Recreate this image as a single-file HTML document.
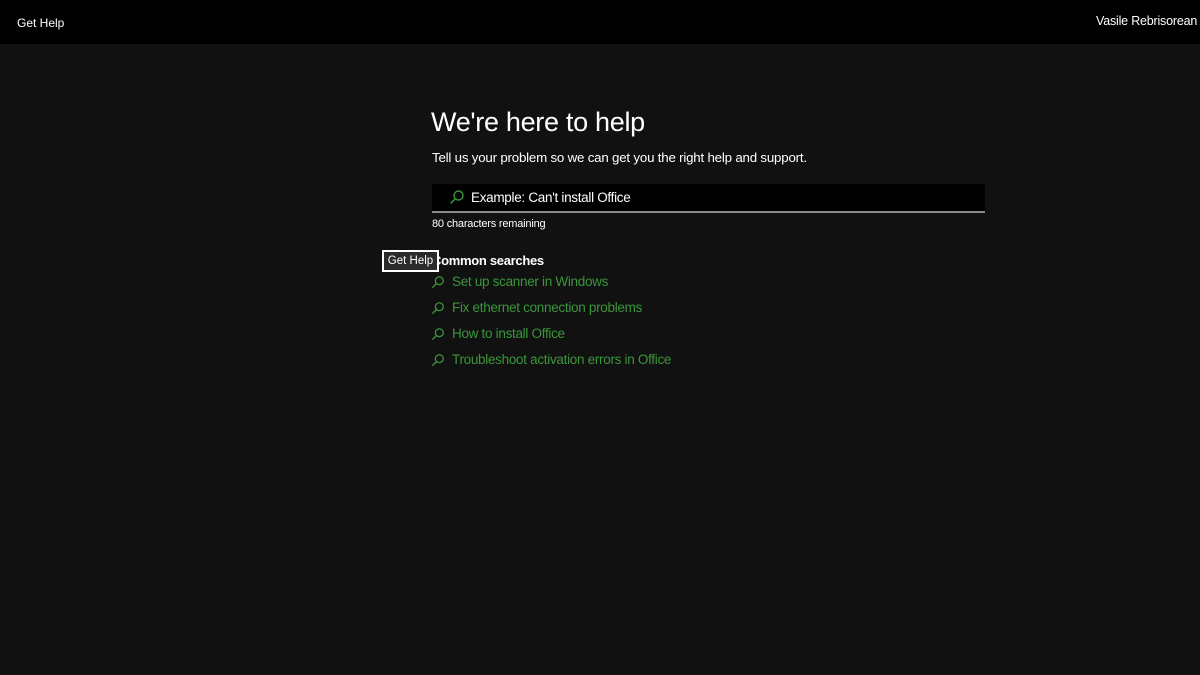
<!DOCTYPE html>
<html><head><meta charset="utf-8"><style>
body{margin:0;width:1200px;height:675px;background:#111111;font-family:"Liberation Sans",sans-serif;color:#fff;position:relative;overflow:hidden}
.top{position:absolute;left:0;top:0;width:1200px;height:44px;background:#000}
.t{position:absolute;white-space:nowrap}
.g{color:#3a963a;font-size:13.5px;letter-spacing:-0.3px}
svg{position:absolute}
</style></head><body>
<div class="top"></div>
<div class="t" style="left:17px;top:16px;font-size:12px">Get Help</div>
<div class="t" style="left:1096px;top:14px;font-size:12.5px;letter-spacing:-0.2px">Vasile Rebrisorean</div>
<div class="t" style="left:431px;top:107px;font-size:27px;letter-spacing:-0.3px">We're here to help</div>
<div class="t" style="left:432px;top:150px;font-size:13.3px;letter-spacing:-0.2px">Tell us your problem so we can get you the right help and support.</div>
<div style="position:absolute;left:432px;top:184px;width:553px;height:27px;background:#000;border-bottom:2px solid #8a8a8a"></div>
<svg style="left:449px;top:189px" width="16" height="16" viewBox="0 0 16 16"><circle cx="9.5" cy="6.5" r="4.5" fill="none" stroke="#3a963a" stroke-width="1.4"/><line x1="6.3" y1="9.7" x2="1.5" y2="14.5" stroke="#3a963a" stroke-width="1.5"/></svg>
<div class="t" style="left:471px;top:190px;font-size:13.5px;letter-spacing:-0.3px">Example: Can't install Office</div>
<div class="t" style="left:432px;top:218px;font-size:11px;letter-spacing:-0.2px">80 characters remaining</div>
<div class="t" style="left:432px;top:253px;font-size:13px;font-weight:bold;letter-spacing:-0.3px">Common searches</div>
<div class="t" style="left:382px;top:250px;width:57px;height:22px;background:#2b2b2b;border:2px solid #fff;box-sizing:border-box;font-size:11.5px;line-height:18px;text-align:center">Get Help</div>
<svg style="left:431px;top:275px" width="14" height="14" viewBox="0 0 16 16"><circle cx="9.5" cy="6.5" r="4.5" fill="none" stroke="#3a963a" stroke-width="1.5"/><line x1="6.3" y1="9.7" x2="1.5" y2="14.5" stroke="#3a963a" stroke-width="1.6"/></svg>
<div class="t g" style="left:452px;top:274px">Set up scanner in Windows</div>
<svg style="left:431px;top:301px" width="14" height="14" viewBox="0 0 16 16"><circle cx="9.5" cy="6.5" r="4.5" fill="none" stroke="#3a963a" stroke-width="1.5"/><line x1="6.3" y1="9.7" x2="1.5" y2="14.5" stroke="#3a963a" stroke-width="1.6"/></svg>
<div class="t g" style="left:452px;top:300px">Fix ethernet connection problems</div>
<svg style="left:431px;top:327px" width="14" height="14" viewBox="0 0 16 16"><circle cx="9.5" cy="6.5" r="4.5" fill="none" stroke="#3a963a" stroke-width="1.5"/><line x1="6.3" y1="9.7" x2="1.5" y2="14.5" stroke="#3a963a" stroke-width="1.6"/></svg>
<div class="t g" style="left:452px;top:326px">How to install Office</div>
<svg style="left:431px;top:353px" width="14" height="14" viewBox="0 0 16 16"><circle cx="9.5" cy="6.5" r="4.5" fill="none" stroke="#3a963a" stroke-width="1.5"/><line x1="6.3" y1="9.7" x2="1.5" y2="14.5" stroke="#3a963a" stroke-width="1.6"/></svg>
<div class="t g" style="left:452px;top:352px">Troubleshoot activation errors in Office</div>
</body></html>
